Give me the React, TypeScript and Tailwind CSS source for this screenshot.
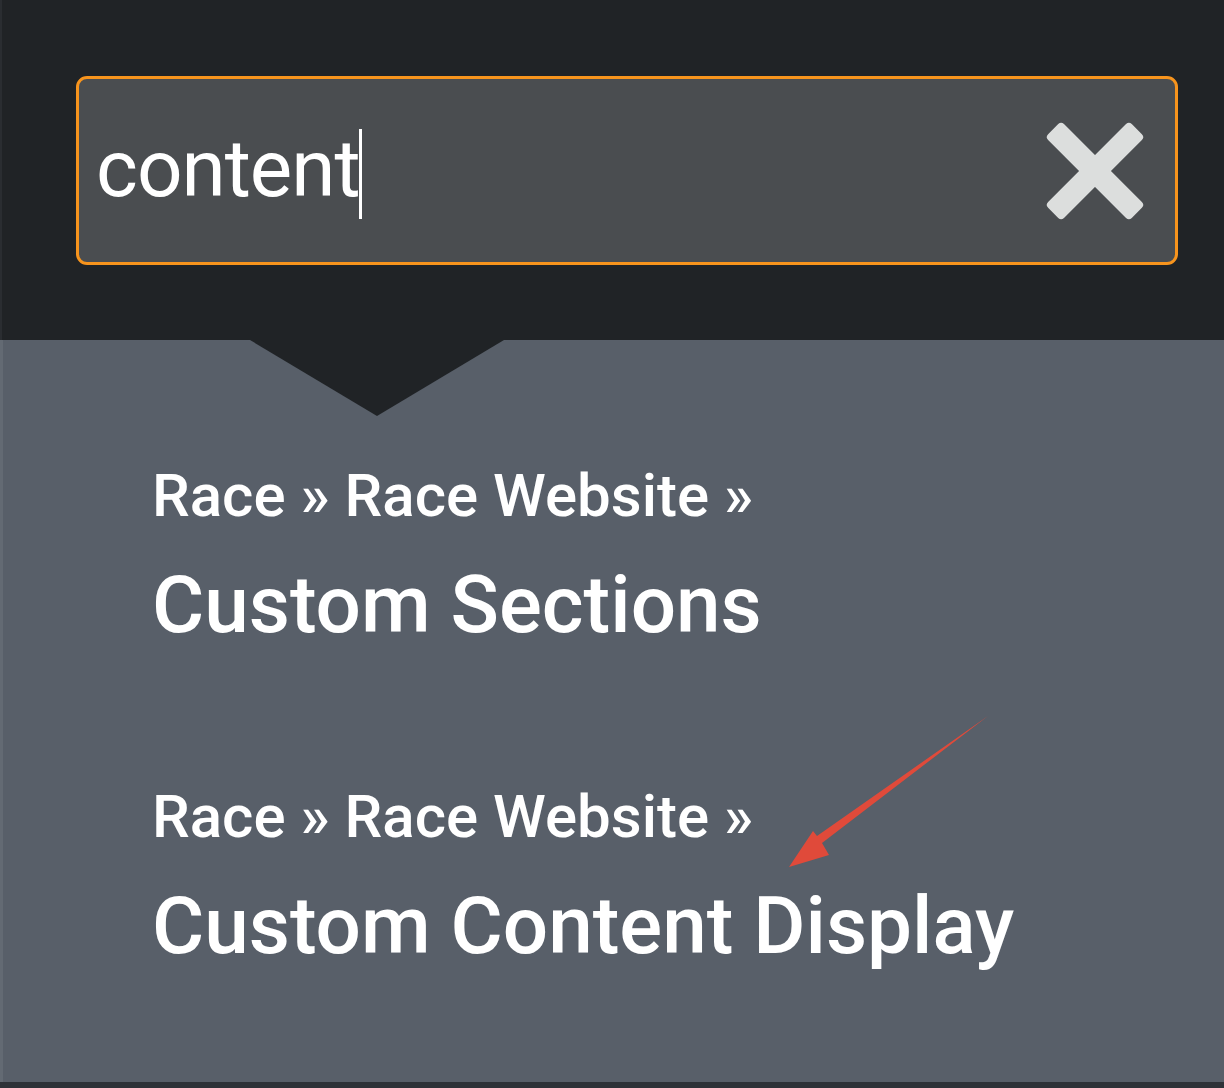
import React from "react";

const results = [
  { crumb: "Race » Race Website »", title: "Custom Sections" },
  { crumb: "Race » Race Website »", title: "Custom Content Display" },
];

function CloseIcon() {
  return (
    <svg width="102" height="102" viewBox="0 0 100 100">
      <g fill="#dcdedd" transform="rotate(45 50 50)">
        <rect x="39" y="-8" width="22" height="116" rx="4" />
        <rect x="-8" y="39" width="116" height="22" rx="4" />
      </g>
    </svg>
  );
}

export default function App() {
  return (
    <div
      className="w-[1224px] h-[1088px] flex flex-col bg-[#2e3238] overflow-hidden"
      style={{ fontFamily: "Roboto, 'Noto Sans', sans-serif" }}
    >
      {/* search header */}
      <div className="h-[340px] bg-[#202326] pl-[74px] pr-[46px] pt-[76px] border-l-[2px] border-[#2a2d31]">
        <div className="h-[189px] rounded-[11px] border-[3px] border-[#f7941d] bg-[#4a4d50] flex items-center pl-[17px] pr-[29px]">
          <div className="flex-1 flex items-center text-white text-[80px] leading-none tracking-[-1px] -mt-[4px]">
            <span>content</span>
            <span className="w-[3px] h-[90px] bg-white -ml-[1px] mt-[10px]" />
          </div>
          <CloseIcon />
        </div>
      </div>

      {/* results */}
      <div className="relative flex-1 bg-[#585f69] mb-[6px] border-l-[3px] border-[#636a73] pl-[149px] pt-[126px] text-white font-medium">
        <svg className="absolute left-[247px] top-0" width="254" height="76" viewBox="0 0 254 76">
          <polygon points="0,0 254,0 127,76" fill="#202326" />
        </svg>
        <div className="flex flex-col gap-[142px]">
          {results.map((r) => (
            <div key={r.title} className="flex flex-col">
              <div className="text-[60px] leading-none">{r.crumb}</div>
              <div className="text-[80px] leading-none mt-[39px]">{r.title}</div>
            </div>
          ))}
        </div>
        <svg className="absolute left-[778px] top-[372px]" width="212" height="160" viewBox="0 0 212 160">
          <polygon points="207,4 36,124 32,119 8,155 48,143 41,131" fill="#e04a3a" />
        </svg>
      </div>
    </div>
  );
}
